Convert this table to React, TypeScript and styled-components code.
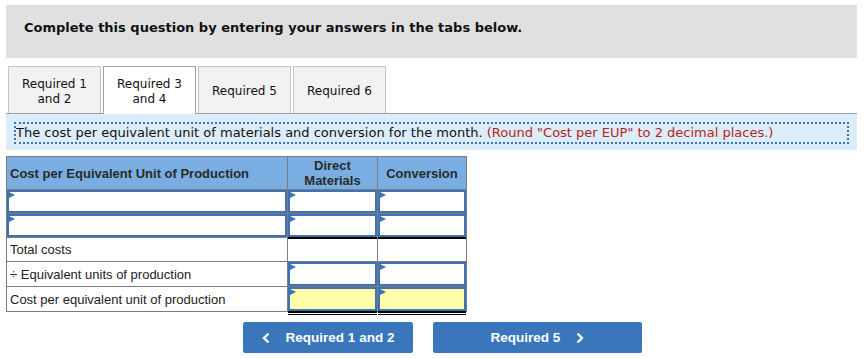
import React from 'react';
import styled, { createGlobalStyle } from 'styled-components';

const GlobalStyle = createGlobalStyle`
  html, body {
    margin: 0;
    padding: 0;
    background: #ffffff;
  }
`;

const Page = styled.div`
  width: 864px;
  height: 358px;
  padding: 5px 7px 0 6px;
  box-sizing: border-box;
  font-family: 'DejaVu Sans', Verdana, sans-serif;
  color: #222;
`;

const Banner = styled.div`
  height: 53px;
  background: #e0e0e0;
  padding: 15px 0 0 18px;
  box-sizing: border-box;
  font-size: 13px;
  font-weight: bold;
  color: #111;
`;

const TabBar = styled.div`
  display: flex;
  gap: 2px;
  margin-top: 8px;
  padding-left: 2px;
  height: 47px;
`;

const Tab = styled.div<{ $active?: boolean }>`
  width: 93px;
  box-sizing: border-box;
  display: flex;
  align-items: center;
  justify-content: center;
  text-align: center;
  font-size: 12px;
  line-height: 15px;
  padding-top: 3px;
  color: #111;
  background: ${p => (p.$active ? '#ffffff' : '#f2f2f2')};
  border: 1px solid ${p => (p.$active ? '#a0a0a0' : '#c4c4c4')};
  border-bottom: none;
  position: relative;
  z-index: ${p => (p.$active ? 1 : 0)};
  margin-bottom: ${p => (p.$active ? '-1px' : '0')};
  height: ${p => (p.$active ? '48px' : '47px')};
`;

const Instruction = styled.div`
  background: #dbedfa;
  border-top: 1px solid #a0a0a0;
  padding: 8px 8px 6px 8px;
`;

const InstructionText = styled.div`
  border: 2px dotted #3a74bb;
  font-size: 13px;
  line-height: 16px;
  padding: 1px 0 1px 0;
  color: #111;
`;

const Note = styled.span`
  color: #b5241c;
`;

const Grid = styled.table`
  margin-top: 6px;
  border-collapse: collapse;
  font-family: 'Liberation Sans', Arial, sans-serif;
  font-size: 13px;
  color: #222;
  table-layout: fixed;
  width: 460px;
`;

const HeadCell = styled.th<{ $w: number; $align?: string }>`
  width: ${p => p.$w}px;
  height: 33px;
  padding: 0 3px;
  background: #7aaee3;
  border: 1px solid #7c7c7c;
  font-weight: bold;
  font-size: 13px;
  line-height: 15px;
  color: #2a2a2a;
  text-align: ${p => p.$align || 'center'};
  box-sizing: border-box;
`;

const LabelCell = styled.td`
  height: 24px;
  padding: 0 3px;
  border: 1px solid #7c7c7c;
  white-space: nowrap;
  box-sizing: border-box;
`;

const PlainCell = styled.td`
  border: 1px solid #7c7c7c;
  padding: 0;
`;

const EntryCell = styled.td<{ $h?: number }>`
  padding: 0;
  height: ${p => p.$h || 23}px;
  border: 1px solid #7c7c7c;
`;

const Entry = styled.div<{ $fill?: string; $rule?: 'single' | 'double' }>`
  position: relative;
  height: 100%;
  box-sizing: border-box;
  border: 2px solid #3e72b5;
  background: ${p => p.$fill || '#ffffff'};
  box-shadow: ${p =>
    p.$rule === 'single'
      ? '0 2px 0 #000'
      : p.$rule === 'double'
      ? '0 2px 0 #000, 0 3px 0 #fff, 0 4px 0 #000'
      : 'none'};

  &::before {
    content: '';
    position: absolute;
    left: 0;
    top: 0;
    border-left: 6px solid #3e72b5;
    border-top: 3px solid transparent;
    border-bottom: 3px solid transparent;
  }
`;

const Nav = styled.div`
  display: flex;
  gap: 20px;
  margin-top: 10px;
  padding-left: 237px;
`;

const NavButton = styled.div<{ $w: number }>`
  width: ${p => p.$w}px;
  height: 31px;
  background: #3a76bc;
  border-radius: 2px;
  color: #fff;
  font-family: 'Liberation Sans', Arial, sans-serif;
  font-weight: bold;
  font-size: 13.5px;
  display: flex;
  align-items: center;
  justify-content: center;
  gap: 16px;
`;

const Chevron = ({ dir }: { dir: 'left' | 'right' }) => (
  <svg width="8" height="12" viewBox="0 0 8 12">
    <path
      d={dir === 'left' ? 'M6.5 1.5 L2 6 L6.5 10.5' : 'M1.5 1.5 L6 6 L1.5 10.5'}
      fill="none"
      stroke="#fff"
      strokeWidth="2.4"
    />
  </svg>
);

const App: React.FC = () => {
  return (
    <>
      <GlobalStyle />
      <Page>
        <Banner>Complete this question by entering your answers in the tabs below.</Banner>

        <TabBar>
          <Tab>Required 1<br />and 2</Tab>
          <Tab $active>Required 3<br />and 4</Tab>
          <Tab>Required 5</Tab>
          <Tab>Required 6</Tab>
        </TabBar>

        <Instruction>
          <InstructionText>
            The cost per equivalent unit of materials and conversion for the month.{' '}
            <Note>(Round "Cost per EUP" to 2 decimal places.)</Note>
          </InstructionText>
        </Instruction>

        <Grid>
          <thead>
            <tr>
              <HeadCell $w={281} $align="left">Cost per Equivalent Unit of Production</HeadCell>
              <HeadCell $w={90}>Direct<br />Materials</HeadCell>
              <HeadCell $w={89}>Conversion</HeadCell>
            </tr>
          </thead>
          <tbody>
            <tr>
              <EntryCell><Entry /></EntryCell>
              <EntryCell><Entry /></EntryCell>
              <EntryCell><Entry /></EntryCell>
            </tr>
            <tr>
              <EntryCell><Entry /></EntryCell>
              <EntryCell><Entry $rule="single" /></EntryCell>
              <EntryCell><Entry $rule="single" /></EntryCell>
            </tr>
            <tr>
              <LabelCell>Total costs</LabelCell>
              <PlainCell />
              <PlainCell />
            </tr>
            <tr>
              <LabelCell>÷ Equivalent units of production</LabelCell>
              <EntryCell $h={24}><Entry /></EntryCell>
              <EntryCell $h={24}><Entry /></EntryCell>
            </tr>
            <tr>
              <LabelCell>Cost per equivalent unit of production</LabelCell>
              <EntryCell $h={24}><Entry $fill="#ffffaa" $rule="double" /></EntryCell>
              <EntryCell $h={24}><Entry $fill="#ffffaa" $rule="double" /></EntryCell>
            </tr>
          </tbody>
        </Grid>

        <Nav>
          <NavButton $w={170}>
            <Chevron dir="left" />
            <span>Required 1 and 2</span>
          </NavButton>
          <NavButton $w={209}>
            <span>Required 5</span>
            <Chevron dir="right" />
          </NavButton>
        </Nav>
      </Page>
    </>
  );
};

export default App;
